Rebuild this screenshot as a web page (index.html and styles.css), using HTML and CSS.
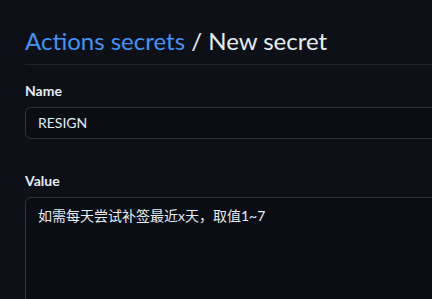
FILE: index.html
```html
<!DOCTYPE html>
<html>
<head>
<meta charset="utf-8">
<link rel="stylesheet" href="styles.css">
</head>
<body>
<div class="page">
  <div class="subhead">
    <h2 class="subhead-heading"><a class="crumb" href="#">Actions secrets</a> / New secret</h2>
  </div>
  <div class="form-group">
    <label class="label">Name</label>
    <div class="input">RESIGN</div>
  </div>
  <div class="form-group">
    <label class="label">Value</label>
    <div class="textarea">如需每天尝试补签最近x天，取值1~7</div>
  </div>
</div>
</body>
</html>
```
FILE: styles.css
```css
html, body {
  margin: 0;
  padding: 0;
  background: #0d1117;
  overflow: hidden;
}
body {
  font-family: Lato, "Noto Sans CJK SC", sans-serif;
  color: #e6edf3;
}
.page {
  width: 900px;
  padding: 26px 0 0 25px;
}
.subhead {
  border-bottom: 1px solid #21262d;
  padding-bottom: 8px;
  margin-bottom: 16px;
}
.subhead-heading {
  margin: 0;
  font-size: 24px;
  font-weight: 400;
  line-height: 30px;
  color: #e6edf3;
}
.crumb {
  color: #4493f8;
  text-decoration: none;
}
.form-group {
  margin-bottom: 32px;
}
.label {
  display: block;
  font-size: 14px;
  font-weight: 700;
  line-height: 20px;
  margin-bottom: 6px;
  color: #e6edf3;
}
.input {
  box-sizing: border-box;
  height: 32px;
  padding: 0 12px;
  font-size: 14px;
  line-height: 30px;
  background: #0a0d14;
  border: 1px solid #30363d;
  border-radius: 6px;
}
.textarea {
  box-sizing: border-box;
  height: 200px;
  padding: 8px 12px;
  font-size: 14px;
  line-height: 20px;
  background: #0a0d14;
  border: 1px solid #30363d;
  border-radius: 6px;
}
```
